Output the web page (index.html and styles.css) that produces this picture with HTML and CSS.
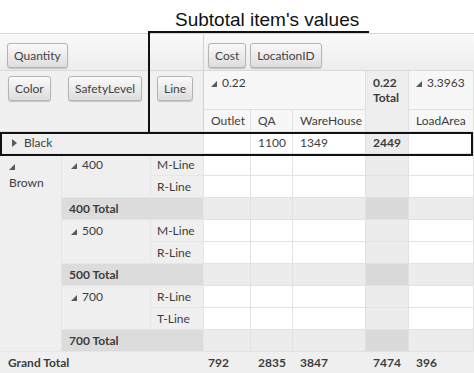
FILE: index.html
```html
<!DOCTYPE html>
<html lang="en">
<head>
    <meta charset="UTF-8">
    <title>Pivot grid - subtotal item</title>
    <link rel="stylesheet" href="styles.css">
</head>
<body>
    <div class="page">
        <div class="caption">Subtotal item's values</div>

        <div class="pivot">
            <!-- filter area -->
            <div class="area area-left"><span class="btn">Quantity</span></div>
            <div class="area area-right"><span class="btn">Cost</span><span class="btn">LocationID</span></div>

            <!-- row fields + column headers -->
            <div class="fld fld-1"><span class="btn">Color</span></div>
            <div class="fld fld-2"><span class="btn">SafetyLevel</span></div>
            <div class="fld fld-3"><span class="btn">Line</span></div>
            <div class="dim span3"><span class="col"></span>0.22</div>
            <div class="dimtot">0.22<br>Total</div>
            <div class="dim"><span class="col"></span>3.3963</div>

            <div class="c mem">Outlet</div>
            <div class="c mem">QA</div>
            <div class="c mem">WareHouse</div>
            <div class="c mem">LoadArea</div>

            <!-- Black -->
            <div class="c rh span3 black"><span class="exp"></span>Black</div>
            <div class="c"></div>
            <div class="c">1100</div>
            <div class="c">1349</div>
            <div class="c tot b">2449</div>
            <div class="c"></div>

            <!-- Brown -->
            <div class="c rh brown"><span class="col"></span><br>Brown</div>
            <div class="c rh grp"><span class="col"></span>400</div>
            <div class="c rh line">M-Line</div>
            <div class="c"></div><div class="c"></div><div class="c"></div><div class="c tot"></div><div class="c"></div>
            <div class="c rh line">R-Line</div>
            <div class="c"></div><div class="c"></div><div class="c"></div><div class="c tot"></div><div class="c"></div>
            <div class="c sub span2">400 Total</div>
            <div class="c st"></div><div class="c st"></div><div class="c st"></div><div class="c st-tot"></div><div class="c st"></div>

            <div class="c rh grp"><span class="col"></span>500</div>
            <div class="c rh line">M-Line</div>
            <div class="c"></div><div class="c"></div><div class="c"></div><div class="c tot"></div><div class="c"></div>
            <div class="c rh line">R-Line</div>
            <div class="c"></div><div class="c"></div><div class="c"></div><div class="c tot"></div><div class="c"></div>
            <div class="c sub span2">500 Total</div>
            <div class="c st"></div><div class="c st"></div><div class="c st"></div><div class="c st-tot"></div><div class="c st"></div>

            <div class="c rh grp"><span class="col"></span>700</div>
            <div class="c rh line">R-Line</div>
            <div class="c"></div><div class="c"></div><div class="c"></div><div class="c tot"></div><div class="c"></div>
            <div class="c rh line">T-Line</div>
            <div class="c"></div><div class="c"></div><div class="c"></div><div class="c tot"></div><div class="c"></div>
            <div class="c sub span2">700 Total</div>
            <div class="c st"></div><div class="c st"></div><div class="c st"></div><div class="c st-tot"></div><div class="c st"></div>

            <!-- Grand total -->
            <div class="c gt span3">Grand Total</div>
            <div class="c gt gt-first">792</div>
            <div class="c gt">2835</div>
            <div class="c gt">3847</div>
            <div class="c gt">7474</div>
            <div class="c gt">396</div>
        </div>

        <div class="callout-h"></div>
        <div class="callout-v"></div>
        <div class="callout-box"></div>
    </div>
</body>
</html>
```

FILE: styles.css
```css
* {
    box-sizing: border-box;
}

body {
    margin: 0;
    background: #fff;
    font-family: Lato, "Noto Sans", sans-serif;
    font-size: 12px;
    color: #3d3d3d;
}

.page {
    position: relative;
    width: 474px;
    height: 373px;
    overflow: hidden;
}

.caption {
    height: 33px;
    padding: 10px 0 0 175px;
    font-family: "Liberation Sans", Arial, sans-serif;
    font-size: 19px;
    line-height: 20px;
    color: #111;
}

.pivot {
    display: grid;
    grid-template-columns: 62px 89px 53px 47px 42px 73px 43px 65px;
    grid-template-rows: 37px 39px 22px repeat(11, 22px);
    border-top: 1px solid #d6d6d6;
}

/* filter area */
.area {
    padding: 9px 7px 0;
    background: linear-gradient(#f9f9f9, #ededed);
    border-bottom: 1px solid #d9d9d9;
}
.area-left {
    grid-column: span 3;
    border-right: 1px solid #d2d2d2;
}
.area-right {
    grid-column: span 5;
    display: flex;
    gap: 4px;
    padding-left: 4px;
}

.btn {
    display: inline-block;
    height: 25px;
    line-height: 23px;
    padding: 0 6px;
    border: 1px solid #b4b4b4;
    border-radius: 3px;
    background: linear-gradient(#fafafa, #dddddd);
    box-shadow: 0 1px 1px rgba(0, 0, 0, 0.18);
    color: #444;
    white-space: nowrap;
}

/* row fields */
.fld {
    grid-row: span 2;
    padding: 5px 0 0 6px;
    background: #f0f0f0;
    border-bottom: 1px solid #d9d9d9;
}
.fld-1 {
    padding-left: 8px;
}
.fld-3 {
    border-right: 1px solid #d2d2d2;
}

/* column headers */
.dim {
    padding: 4px 7px 0;
    line-height: 16px;
    background: #f7f7f7;
    border-right: 1px solid #e0e0e0;
    border-bottom: 1px solid #e0e0e0;
    white-space: nowrap;
}
.dimtot {
    grid-row: span 2;
    padding: 4px 7px 0;
    line-height: 15px;
    font-weight: bold;
    background: #eeeeee;
    border-right: 1px solid #e0e0e0;
    border-bottom: 1px solid #e0e0e0;
}
.mem {
    background: #f7f7f7;
}

.span2 {
    grid-column: span 2;
}
.span3 {
    grid-column: span 3;
}

/* cells */
.c {
    padding: 0 7px;
    line-height: 21px;
    border-right: 1px solid #e2e2e2;
    border-bottom: 1px solid #e2e2e2;
    white-space: nowrap;
    overflow: hidden;
}
.b {
    font-weight: bold;
}
.tot {
    background: #ececec;
}
.st {
    background: #ececec;
}
.st-tot {
    background: #dadada;
}

.rh {
    background: #efefef;
    border-color: #e6e6e6;
}
.black {
    padding-left: 12px;
}
.brown {
    grid-row: span 9;
    padding: 3px 0 0 9px;
    line-height: 17px;
}
.grp {
    grid-row: span 2;
    padding-left: 9px;
}
.line {
    padding-left: 6px;
}
.sub {
    padding-left: 7px;
    font-weight: bold;
    background: #dcdcdc;
    border-color: #e6e6e6;
}

.gt {
    font-weight: bold;
    background: #efefef;
    border-right: none;
    border-bottom: none;
}
.span3.gt {
    padding-left: 8px;
}
.gt-first {
    padding-left: 4px;
}

/* tree glyphs */
.col {
    display: inline-block;
    width: 6px;
    height: 6px;
    margin-right: 5px;
    background: #5a5a5a;
    clip-path: polygon(100% 0, 100% 100%, 0 100%);
}
.exp {
    display: inline-block;
    width: 5px;
    height: 8px;
    margin-right: 7px;
    background: #5a5a5a;
    clip-path: polygon(0 0, 100% 50%, 0 100%);
}

/* callout */
.callout-h {
    position: absolute;
    left: 148px;
    top: 31px;
    width: 221px;
    height: 2px;
    background: #111;
}
.callout-v {
    position: absolute;
    left: 148px;
    top: 31px;
    width: 2px;
    height: 101px;
    background: #111;
}
.callout-box {
    position: absolute;
    left: 0;
    top: 132px;
    width: 473px;
    height: 24px;
    border: 2px solid #111;
}
```
